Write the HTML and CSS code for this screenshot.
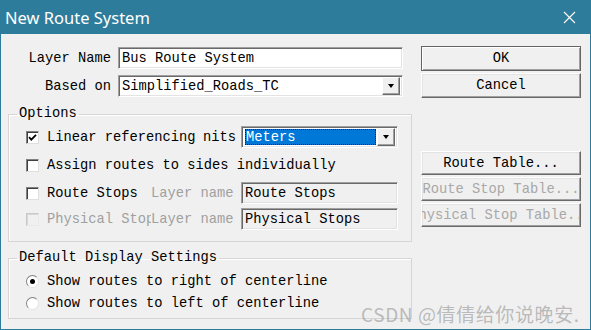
FILE: index.html
```html
<!DOCTYPE html>
<html>
<head>
<meta charset="utf-8">
<link rel="stylesheet" href="styles.css">
</head>
<body>
<div class="window">
  <div class="titlebar">
    <span class="title">New Route System</span>
    <svg class="close" width="13" height="13" viewBox="0 0 13 13"><path d="M1 1L12 12M12 1L1 12" stroke="#fff" stroke-width="1.1" fill="none"/></svg>
  </div>
  <div class="content">
    <div class="leftcol">
      <div class="formrow">
        <span class="flabel">Layer Name</span>
        <div class="field white">Bus Route System</div>
      </div>
      <div class="formrow second">
        <span class="flabel">Based on</span>
        <div class="field white combo">
          <span class="ctext">Simplified_Roads_TC</span>
          <span class="dd"><span class="tri"></span></span>
        </div>
      </div>
      <fieldset class="group options">
        <legend>Options</legend>
        <div class="row">
          <span class="cb"><svg width="11" height="11" viewBox="0 0 11 11"><path d="M2 5.2L4.3 7.6L9 2.8" stroke="#000" stroke-width="1.8" fill="none"/></svg></span>
          <span class="lcol"><span class="lin">Linear referencing</span><span>nits</span></span>
          <div class="field combo meters">
            <span class="sel">Meters</span>
            <span class="dd"><span class="tri"></span></span>
          </div>
        </div>
        <div class="row r2">
          <span class="cb"></span>
          <span class="lcol wide">Assign routes to sides individually</span>
        </div>
        <div class="row r3">
          <span class="cb"></span>
          <span class="lcol"><span class="clip">Route Stops</span><span class="dis">Layer name</span></span>
          <div class="field grey">Route Stops</div>
        </div>
        <div class="row r4">
          <span class="cb off"></span>
          <span class="lcol"><span class="clip dis">Physical Stops</span><span class="dis">Layer name</span></span>
          <div class="field grey">Physical Stops</div>
        </div>
      </fieldset>
      <fieldset class="group display">
        <legend>Default Display Settings</legend>
        <div class="rrow"><span class="radio on"></span><span>Show routes to right of centerline</span></div>
        <div class="rrow"><span class="radio"></span><span>Show routes to left of centerline</span></div>
      </fieldset>
    </div>
    <div class="rightcol">
      <div class="btn default">OK</div>
      <div class="btn">Cancel</div>
      <div class="btn rt">Route Table...</div>
      <div class="btn disabled">Route Stop Table...</div>
      <div class="btn disabled">Physical Stop Table...</div>
    </div>
  </div>
  <div class="watermark">CSDN @倩倩给你说晚安.</div>
</div>
</body>
</html>
```
FILE: styles.css
```css
* { box-sizing: border-box; }
html, body { margin: 0; padding: 0; }
body { width: 591px; height: 330px; overflow: hidden; background: #f0f0f0; }

.window {
  position: relative;
  width: 591px; height: 330px;
  background: #f0f0f0;
  border: 1px solid #2d7b9a;
  border-top: none;
  font-family: "Liberation Mono", monospace;
  font-size: 13.75px;
  color: #000;
}
.titlebar {
  height: 34px;
  margin: 0 -1px;
  background: #2e7c9b;
  display: flex; align-items: center; justify-content: space-between;
  padding: 0 15px 0 5px;
}
.title {
  font-family: "Noto Sans", sans-serif;
  font-size: 16.5px;
  color: #fff;
}
.content {
  display: grid;
  grid-template-columns: 404px 160px;
  column-gap: 9px;
  padding: 12px 0 0 7px;
}
.leftcol { padding-top: 1px; }

.formrow { display: flex; align-items: center; height: 22px; }
.formrow.second { margin-top: 6px; }
.flabel { width: 103px; text-align: right; margin-right: 7px; white-space: nowrap; }

.field {
  height: 22px;
  border: 1px solid;
  border-color: #a0a0a0 #fff #fff #a0a0a0;
  box-shadow: inset 1px 1px 0 #696969, inset -1px -1px 0 #e3e3e3;
  padding: 0 3px;
  display: flex; align-items: center;
  white-space: nowrap; overflow: hidden;
}
.formrow .field { width: 285px; }
.white { background: #fff; }
.grey { background: #f0f0f0; width: 157px; }
.combo { justify-content: space-between; padding-right: 2px; }
.dd {
  width: 18px; height: 18px;
  background: #f0f0f0;
  border: 1px solid; border-color: #fff #696969 #696969 #fff;
  box-shadow: inset -1px -1px 0 #a0a0a0;
  display: flex; align-items: center; justify-content: center;
  flex: none;
}
.tri {
  width: 0; height: 0;
  border-left: 3.5px solid transparent;
  border-right: 3.5px solid transparent;
  border-top: 4px solid #000;
}

.group {
  margin: 9px 0 0 0;
  padding: 4px 0 11px 17px;
  border: 1px solid #d5d5d5;
  box-shadow: 1px 1px 0 #fff inset;
  min-width: 0;
}
.group legend {
  margin-left: -9px;
  padding: 0 2px;
  line-height: 16px;
}
.row { display: flex; align-items: center; height: 22px; }
.row.r2, .row.r3 { margin-top: 6px; }
.row.r4 { margin-top: 4px; }
.cb {
  width: 13px; height: 13px; flex: none;
  border: 1px solid; border-color: #808080 #dfdfdf #dfdfdf #808080;
  background: #fff;
  box-shadow: inset 1px 1px 0 #404040;
  display: flex; align-items: center; justify-content: center;
  margin-right: 8px;
}
.cb.off { border-color: #c8c8c8 #e8e8e8 #e8e8e8 #c8c8c8; box-shadow: inset 1px 1px 0 #d8d8d8; background: #f0f0f0; }
.lcol { width: 187px; margin-right: 7px; display: flex; white-space: nowrap; }
.lcol.wide { width: auto; }
.lin { width: 156px; flex: none; }
.clip { width: 104px; overflow: hidden; flex: none; }
.dis { color: #a0a0a0; }

.meters { width: 157px; background: #fff; padding-left: 3px; }
.sel {
  width: 131px; height: 16px;
  background: #0078d7;
  color: #fff;
  outline: 1px dotted #1a1a1a;
  outline-offset: -1px;
  display: flex; align-items: center;
  padding-left: 1px;
}

.display { margin-top: 8px; padding: 5px 0 5px 17px; }
.rrow { display: flex; align-items: center; height: 20px; }
.rrow + .rrow { margin-top: 2px; }
.radio {
  width: 13px; height: 13px; flex: none;
  border-radius: 50%;
  border: 1px solid; border-color: #808080 #e3e3e3 #e3e3e3 #808080;
  background: #fff;
  margin-right: 8px;
  position: relative;
}
.radio.on::after {
  content: ""; position: absolute;
  left: 3px; top: 3px; width: 5px; height: 5px; border-radius: 50%;
  background: #000;
}

.rightcol { display: flex; flex-direction: column; gap: 2px; }
.btn {
  height: 25px;
  background: #f0f0f0;
  border: 1px solid; border-color: #fff #696969 #696969 #fff;
  box-shadow: inset -1px -1px 0 #a0a0a0, inset 1px 1px 0 #e3e3e3;
  display: flex; align-items: center; justify-content: center;
  white-space: nowrap; overflow: hidden;
}
.btn.default { border-color: #646464; box-shadow: inset 1px 1px 0 #fff, inset -1px -1px 0 #a0a0a0; }
.btn.rt { margin-top: 51px; height: 24px; }
.btn.disabled { height: 24px; color: #a8a8a8; }

.watermark {
  position: absolute;
  left: 360px; top: 300px;
  font-family: "Noto Sans CJK SC", "Noto Sans", sans-serif;
  font-size: 19px;
  color: rgba(155, 155, 155, 0.65);
  letter-spacing: 0.6px;
  white-space: nowrap;
}
```
